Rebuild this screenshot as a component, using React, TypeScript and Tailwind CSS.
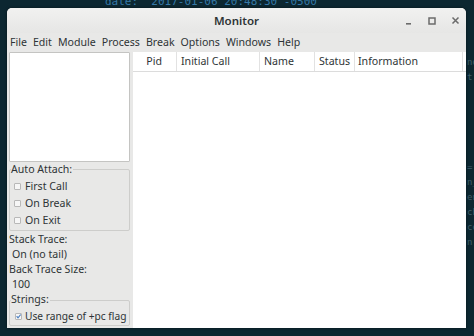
import React from "react";

const font = { fontFamily: '"Noto Sans", "DejaVu Sans", sans-serif' };

function Check({ checked }: { checked?: boolean }) {
  return (
    <span className="inline-flex w-[7px] h-[7px] items-center justify-center rounded-[1px] border border-[#b8b8b8] bg-[#f6f6f6] shrink-0">
      {checked && (
        <svg width="7" height="7" viewBox="0 0 8 8">
          <path d="M1 3.5 L3.2 6.2 L7.5 0.8" stroke="#4a7fc1" strokeWidth="1.8" fill="none" />
        </svg>
      )}
    </span>
  );
}

export default function App() {
  const menus = ["File", "Edit", "Module", "Process", "Break", "Options", "Windows", "Help"];
  return (
    <div className="w-[474px] h-[336px] bg-[#0c2731] overflow-hidden relative" style={font}>
      <div className="absolute left-[105px] top-[-4px] text-[11px] text-[#3579a8] font-['DejaVu_Sans_Mono',monospace] whitespace-pre leading-[11px]">
        date:  2017-01-06 20:48:30 -0500
      </div>
      <div className="absolute left-[467px] top-[55px] text-[9px] leading-[15px] text-[#3d5e6a] font-['DejaVu_Sans_Mono',monospace] whitespace-pre">
        {"nd\nt =\n\n\n\n\n\n=\nn_z\nen\nch\nco\nn"}
      </div>
      <div className="absolute left-[7px] top-[8px] w-[459px] h-[320px] flex flex-col bg-[#e8e8e7] rounded-t-[5px] overflow-hidden shadow-[0_0_3px_rgba(0,0,0,0.5)]">
        <div className="h-[25px] shrink-0 flex items-center relative bg-gradient-to-b from-[#f1f1f0] to-[#e6e6e5] text-[#2e3436]">
          <div className="flex-1 text-center text-[11.5px] font-semibold">Monitor</div>
          <div className="absolute right-[6px] top-0 h-full flex items-center gap-[15px]">
            <svg width="8" height="8" viewBox="0 0 8 8"><rect x="1" y="6" width="5" height="1.6" fill="#6b6b6b" /></svg>
            <svg width="8" height="8" viewBox="0 0 8 8"><rect x="1" y="1" width="6" height="6" stroke="#6b6b6b" strokeWidth="1.5" fill="none" /></svg>
            <svg width="9" height="9" viewBox="0 0 9 9"><path d="M1.5 1.5 L7.5 7.5 M7.5 1.5 L1.5 7.5" stroke="#6b6b6b" strokeWidth="1.5" /></svg>
          </div>
        </div>
        <div className="h-[19px] shrink-0 flex items-center px-[3px] gap-[6px] text-[10.6px] text-[#2e3436] bg-[#e8e8e7]">
          {menus.map((m) => (
            <span key={m}>{m}</span>
          ))}
        </div>
        <div className="flex-1 flex min-h-0">
          <div className="w-[125px] shrink-0 flex flex-col px-[2px] text-[10.6px] text-[#2e3436]">
            <div className="h-[110px] bg-white border border-[#c4c4c2] rounded-[1px]" />
            <div className="mt-[7px] h-[62px] border border-[#cdcdcb] rounded-[2px] relative flex flex-col pl-[4px]">
              <div className="absolute top-[-8px] left-[1px] bg-[#e8e8e7] pr-[1px] leading-[14px]">Auto Attach:</div>
              <div className="mt-[9px] flex flex-col gap-[3px] leading-[14px]">
                <div className="flex items-center gap-[4px]"><Check /><span>First Call</span></div>
                <div className="flex items-center gap-[4px]"><Check /><span>On Break</span></div>
                <div className="flex items-center gap-[4px]"><Check /><span>On Exit</span></div>
              </div>
            </div>
            <div className="mt-[1px] leading-[15px] flex flex-col">
              <span>Stack Trace:</span>
              <span className="pl-[3px]">On (no tail)</span>
              <span>Back Trace Size:</span>
              <span className="pl-[3px]">100</span>
            </div>
            <div className="mt-[8px] h-[26px] border border-[#cdcdcb] rounded-[2px] relative flex items-end pb-[2px] pl-[5px]">
              <div className="absolute top-[-9px] left-[1px] bg-[#e8e8e7] pr-[1px] leading-[14px]">Strings:</div>
              <div className="flex items-center gap-[3px] leading-[14px] whitespace-nowrap text-[10.2px]"><Check checked /><span>Use range of +pc flag</span></div>
            </div>
          </div>
          <div className="flex-1 bg-white flex flex-col ml-[1px] text-[10.6px] text-[#2e3436]">
            <div className="h-[20px] flex items-stretch border-b border-[#dcdcdc]">
              <div className="w-[44px] flex items-center justify-end pr-[14px] border-r border-[#e2e2e2]">Pid</div>
              <div className="w-[83px] flex items-center pl-[4px] border-r border-[#e2e2e2]">Initial Call</div>
              <div className="w-[55px] flex items-center pl-[4px] border-r border-[#e2e2e2]">Name</div>
              <div className="w-[40px] flex items-center pl-[4px] border-r border-[#e2e2e2]">Status</div>
              <div className="w-[108px] flex items-center pl-[3px] border-r border-[#e2e2e2]">Information</div>
              <div className="flex-1" />
            </div>
          </div>
        </div>
      </div>
    </div>
  );
}
